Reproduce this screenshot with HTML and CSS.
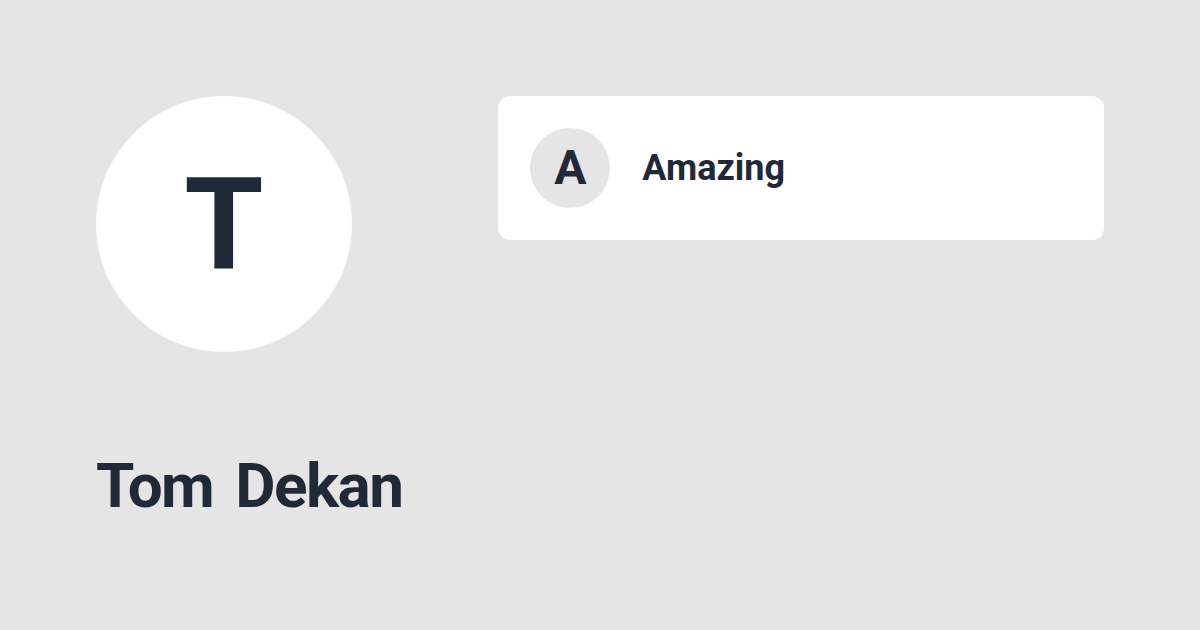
FILE: index.html
```html
<!DOCTYPE html>
<html>
<head>
<meta charset="utf-8">
<link rel="stylesheet" href="styles.css">
</head>
<body>
<div class="page">
  <div class="left">
    <div class="avatar">T</div>
    <div class="name"><span>Tom</span><span>Dekan</span></div>
  </div>
  <div class="right">
    <div class="card">
      <div class="badge">A</div>
      <div class="label">Amazing</div>
    </div>
  </div>
</div>
</body>
</html>
```
FILE: styles.css
```css
html, body {
  margin: 0;
  padding: 0;
}
body {
  width: 1200px;
  height: 630px;
  background: #e5e5e5;
  font-family: Roboto, "Liberation Sans", sans-serif;
  color: #1f2937;
  overflow: hidden;
}
.page {
  box-sizing: border-box;
  width: 1200px;
  height: 630px;
  padding: 96px;
  display: flex;
  gap: 96px;
}
.left {
  display: flex;
  flex-direction: column;
  justify-content: space-between;
}
.avatar {
  width: 256px;
  height: 256px;
  border-radius: 50%;
  background: #ffffff;
  display: flex;
  align-items: center;
  justify-content: center;
  font-size: 128px;
  font-weight: 700;
  line-height: 1;
}
.name {
  display: flex;
  gap: 22px;
  font-size: 62px;
  font-weight: 700;
  letter-spacing: -0.025em;
  line-height: 96px;
}
.right {
  flex: 1;
}
.card {
  background: #ffffff;
  border-radius: 12px;
  padding: 32px;
  display: flex;
  align-items: center;
  gap: 32px;
}
.badge {
  width: 80px;
  height: 80px;
  border-radius: 50%;
  background: #e5e5e5;
  display: flex;
  align-items: center;
  justify-content: center;
  font-size: 48px;
  font-weight: 700;
  line-height: 1;
}
.label {
  font-size: 36px;
  font-weight: 700;
  line-height: 1;
}
```
